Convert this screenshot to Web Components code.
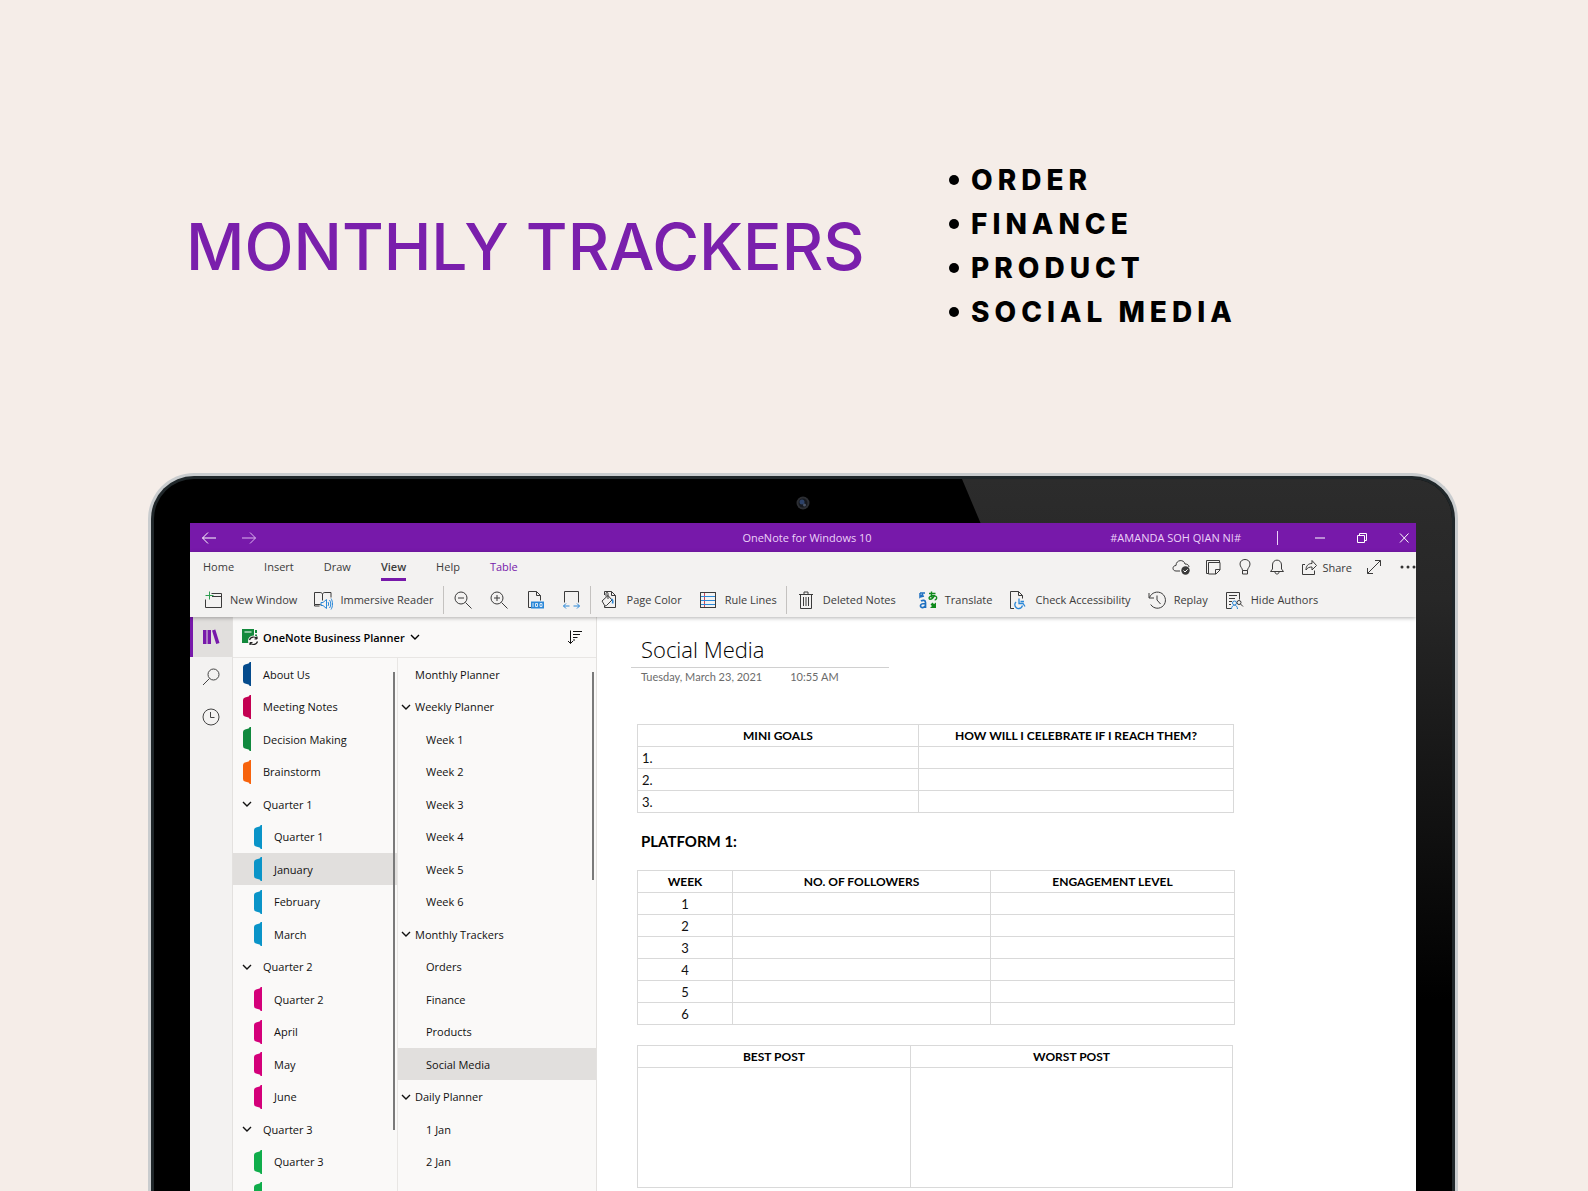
<!DOCTYPE html>
<html lang="en">
<head>
<meta charset="utf-8">
<title>Monthly Trackers</title>
<style>
    body {
        margin: 0;
        height: 100vh;
        overflow: hidden;
        display: flex;
        flex-direction: column;
        background: #f5ede8;
        font-family: "Open Sans", "Noto Sans", sans-serif;
        font-size: 11px;
        color: #111;
    }
</style>
</head>
<body>
<promo-banner heading="MONTHLY TRACKERS">
    <li>ORDER</li>
    <li>FINANCE</li>
    <li>PRODUCT</li>
    <li>SOCIAL MEDIA</li>
</promo-banner>
<laptop-frame>
    <title-bar></title-bar>
    <ribbon-bar></ribbon-bar>
    <notebook-view></notebook-view>
</laptop-frame>

<script>
// every icon is drawn on a 20x20 grid
const icons = {
    back: `<path d="M17 10H3.500M9 4.500 3.500 10 9 15.500"/>`,
    forward: `<path d="M3 10h13.500M11 4.500l5.500 5.500-5.500 5.500"/>`,
    minimize: `<path d="M5 10h10"/>`,
    restore: `<path d="M5.500 7.500h7v7h-7zM7.500 7.500v-2h7v7h-2"/>`,
    close: `<path d="M6 5.500l8.500 9M14.500 5.500l-8.500 9"/>`,
    newWindow: `<path d="M8.500 3.500h10v14h-16v-8M9 6.500h9.500"/><path d="M6.500 1.500v8M2.500 5.500h8" stroke="#2f9e52"/>`,
    reader: `<path d="M9 15.500c-1-.8-2-1-3-1H1.500v-12H7c1.300 0 2 .6 2.500 1.500.5-.9 1.200-1.500 2.500-1.500h6v5M9.500 4v6.500M1.500 14.500v1.500h5"/><path d="M8 12.500h2l3.500-3v9l-3.500-3H8zM15 12c.8 1 .8 3 0 4M16.500 10c1.700 2 1.700 6 0 8M18 8.500c2 3 2 8 0 11" stroke="#2b88d8"/>`,
    zoomOut: `<circle cx="8" cy="8" r="6"/><path d="M5 8h6M12.500 12.500l6 6"/>`,
    zoomIn: `<circle cx="8" cy="8" r="6"/><path d="M5 8h6M8 5v6M12.500 12.500l6 6"/>`,
    page100: `<path d="M7 17.500H3.500v-16h8l4 4v5M11.500 1.500v4h4"/><path d="M6 11.500h13v7H6z" fill="#2b88d8" stroke="none"/><path d="M8 13v4M10.500 13.500h2v3h-2zM15 13.500h2v3h-2z" stroke="#fff" stroke-width=".8"/>`,
    fitWidth: `<path d="M3.500 12.500v-11h14v11"/><path d="M2.500 16h6M12.500 16h6M5 13.500 2.500 16 5 18.500M16 13.500l2.500 2.500-2.500 2.500" stroke="#2b88d8"/>`,
    pageColor: `<path d="M4.500 5V1.500h7l4 4v12h-11V16M11.500 1.500v4h4"/><path d="M2 11l6-5.500 4 4.500-5.500 5.500-1.500.5zM8 9V3.500C8 2 6 2 6 3.500v3"/><path d="M11.500 9c1.500.5 1.500 3 1 4.500" stroke="#2b88d8" stroke-width="1.600"/>`,
    ruleLines: `<path d="M2.500 2.500h15v15h-15z"/><path d="M6.500 3v14" stroke="#c8465b"/><path d="M3 6.500h14M3 10.500h14M3 14.500h14" stroke="#2b88d8"/><path d="M2.500 2.500h15v15h-15z"/>`,
    trash: `<path d="M4.500 4.500h11v14h-11zM3 4.500h14M8 4V2h4v2M7.500 7v9M10 7v9M12.500 7v9"/>`,
    translate: `<path d="M2 3h5M2 3v4l3-3M2 7l4-1" stroke="#1d6fc0" stroke-width="1.500"/><path d="M3 11c2-1.300 4.500-.8 4.500 1.500V18M7.500 13.500c-3 0-5 .5-5 2.300 0 2.500 4 2.300 5-.3" stroke="#1d6fc0" stroke-width="1.700"/><path d="M11 3.500h6.500M13.500 1.500c-.3 3 0 5 .8 7.300M16.500 5c-.8 2.500-2.800 4.300-4.500 4.300-1.800-.6-.7-3.300 2-3.600 3-.4 5 .6 4.700 2.400-.1 1-1 1.700-2 2" stroke="#108a1c" stroke-width="1.400"/><path d="M18 12.500V18h-6l2-2-1.500-1.500 2-2L16 14z" fill="#108a1c" stroke="none"/>`,
    accessibility: `<path d="M6 18.500H2.500v-17h8l4 4v3M10.500 1.500v4h4"/><path d="M8 12c-2.500 2.500-.5 7 3 6.500 2 0 3-1.500 3.500-3M11 8.500v5h4l2 3M12.500 11.500h3.500" stroke="#2b88d8" stroke-width="1.300"/>`,
    replay: `<path d="M2 3v5h5M2.500 7.500c2-5 8-7 12.500-4 4 3 4.500 8.500 1.500 12-3.500 4-10 3.500-12.800-1M10 5.500V10l3.500 4"/>`,
    authors: `<path d="M7 18.500H2.500v-16h13v7M5 5.500h8M5 8.500h6M5 11.500h3M5 14.500h2"/><circle cx="10.500" cy="13" r="2" stroke="#2b88d8"/><path d="M7.500 19c0-5 6-5 6 0" stroke="#2b88d8"/><circle cx="15" cy="12.500" r="2"/><path d="M16.500 14l2.500 2.500"/>`,
    cloud: `<path d="M9 14H5C1 14 1 8.500 5 8.500 5 2.500 13 2 14 7c2.300 0 4 1 4 3"/><circle cx="14.500" cy="13.500" r="4.200" fill="#3b3b3b" stroke="none"/><path d="M12.500 13.500l1.500 1.500 2.700-2.700" stroke="#fff"/>`,
    note: `<path d="M5.500 16.500h-2v-13h13v2"/><path d="M5.500 5.500H17V13l-4 4H5.500zM17 12.500h-4.500V17"/>`,
    bulb: `<path d="M7.500 13.500C7.500 11 5 10 5 7c0-6 10-6 10 0 0 3-2.500 4-2.500 6.500zM7.500 13.500v3.500h5v-3.500"/>`,
    bell: `<path d="M3.500 14.500h13l-2-2.500V8c0-6.500-9-6.500-9 0v4zM8 15c0 2.700 4 2.700 4 0"/>`,
    share: `<path d="M6 7.500H3.500v10h12v-4"/><path d="M7 13c0-4 2-6.500 6-6.500v-3L17.500 8.500 13 13v-3c-2.500 0-4.500.5-6 3z"/>`,
    expand: `<path d="M3.500 16.500l13-13M11 3.500h5.500V9M3.500 11v5.500H9"/>`,
    more: `<g fill="#333" stroke="none"><circle cx="6" cy="10" r="1.500"/><circle cx="12" cy="10" r="1.500"/><circle cx="18" cy="10" r="1.500"/></g>`,
    library: `<path d="M2 3h3.500v14H2zM6.500 3H10v14H6.500zM11 3.500l3.300-.9L18.500 16l-3.300 1z" fill="#7719aa" stroke="none"/>`,
    search: `<circle cx="12.500" cy="7.500" r="5.500"/><path d="M8.500 11.500 2 18"/>`,
    recent: `<circle cx="10" cy="10" r="8"/><path d="M9.500 5v5.500h4"/>`,
    notebook: `<path d="M2 2h12v14H2z" fill="#13893c" stroke="none"/><path d="M4.500 5h7" stroke="#fff"/><path d="M15 3h2v3h-2zM15 7.500h2v2h-2z" fill="#13893c" stroke="none"/><circle cx="13.500" cy="14" r="5.500" fill="#faf9f8" stroke="none"/><path d="M9.500 13c1-3.500 6-4 7.500-1V9.500M17 12h-2.500M17.500 14.500c-1 3.500-6 4-7.500 1V18M10 15.500h2.500" stroke="#222" stroke-width="1.200"/>`,
    sort: `<path d="M5.500 3.500v13M3 14l2.500 2.500L8 14M8 4.500h9M8 7.500h7M8 10.500h4.500M8 13h2"/>`,
    chevron: `<path d="M6 8l4 4 4-4" stroke-width="1.400"/>`
};

class UiIcon extends HTMLElement {
    constructor () {
        super();
        this.attachShadow({mode: "open"});
    }

    connectedCallback () {
        this.shadowRoot.innerHTML = `
        <style>
            :host { display: block; flex: none; width: 20px; height: 20px; }
            svg { display: block; width: 100%; height: 100%; fill: none; stroke: currentColor; stroke-width: 1; }
        </style>
        <svg viewBox="0 0 20 20" aria-hidden="true">${icons[this.getAttribute("name")]}</svg>`;
    }
}
customElements.define("ui-icon", UiIcon);


class PromoBanner extends HTMLElement {
    constructor () {
        super();
        this.attachShadow({mode: "open"});
    }

    connectedCallback () {
        this.shadowRoot.innerHTML = `
        <style>
            :host {
                display: grid;
                grid-template-columns: 760px 1fr;
                align-items: center;
                flex: none;
                box-sizing: border-box;
                height: 473px;
                padding: 20px 0 0 186px;
                font-family: Inter, sans-serif;
            }
            h1 {
                margin: 0;
                font-size: 64px;
                font-weight: 500;
                line-height: 72px;
                color: #7a1fac;
                white-space: nowrap;
            }
            ul {
                margin: 0 0 2px;
                padding: 0;
                list-style: none;
                font-size: 28px;
                font-weight: 800;
                line-height: 44px;
                letter-spacing: 5px;
                color: #000;
            }
            ::slotted(li) {
                display: flex;
                align-items: center;
            }
            ::slotted(li)::before {
                content: "";
                width: 10px;
                height: 10px;
                margin: 0 12px 0 3px;
                border-radius: 50%;
                background: #000;
            }
        </style>
        <h1>${this.getAttribute("heading")}</h1>
        <ul><slot></slot></ul>`;
    }
}
customElements.define("promo-banner", PromoBanner);


class LaptopFrame extends HTMLElement {
    constructor () {
        super();
        this.attachShadow({mode: "open"});
    }

    connectedCallback () {
        this.shadowRoot.innerHTML = `
        <style>
            :host {
                display: flex;
                flex: 1;
                min-height: 0;
                margin: 0 130px 0 148px;
            }
            .shell {
                position: relative;
                flex: 1;
                min-width: 0;
                display: flex;
                border: 3px solid #c9ccce;
                border-bottom: 0;
                border-radius: 46px 46px 0 0;
                background: #20272a;
                overflow: hidden;
            }
            .bezel {
                flex: 1;
                min-width: 0;
                display: flex;
                flex-direction: column;
                margin: 3px 3px 0;
                padding: 0 36px;
                border-radius: 40px 40px 0 0;
                background: #000;
                overflow: hidden;
                position: relative;
            }
            /* reflection falling over the right side of the glass */
            .glare {
                position: absolute;
                inset: 0 0 0 808px;
                background: linear-gradient(#2c2c2c, #272727 120px, #000 520px);
                clip-path: polygon(0 0, 100% 0, 100% 100%, 300px 100%);
            }
            .camera {
                position: relative;
                flex: none;
                box-sizing: border-box;
                height: 44px;
                padding-top: 4px;
                display: flex;
                align-items: center;
                justify-content: center;
            }
            .camera svg { display: block; width: 14px; height: 14px; }
            .screen {
                position: relative;
                flex: 1;
                min-height: 0;
                display: flex;
                flex-direction: column;
                background: #fff;
                overflow: hidden;
            }
        </style>
        <div class="shell">
            <div class="bezel">
                <div class="glare"></div>
                <div class="camera">
                    <svg viewBox="0 0 14 14">
                        <circle cx="7" cy="7" r="6.500" fill="#2c2e33"/>
                        <circle cx="7" cy="7" r="4.500" fill="#16191f"/>
                        <circle cx="6" cy="6" r="2.500" fill="#2c4168"/>
                        <circle cx="8.500" cy="9" r="1.500" fill="#4a5468"/>
                    </svg>
                </div>
                <div class="screen"><slot></slot></div>
            </div>
        </div>`;
    }
}
customElements.define("laptop-frame", LaptopFrame);


class TitleBar extends HTMLElement {
    constructor () {
        super();
        this.attachShadow({mode: "open"});
    }

    connectedCallback () {
        this.shadowRoot.innerHTML = `
        <style>
            :host {
                display: grid;
                grid-template-columns: 1fr auto 1fr;
                align-items: center;
                flex: none;
                height: 29px;
                background: #7719aa;
                color: #ecd2f8;
            }
            div { display: flex; align-items: center; }
            button {
                border: 0;
                padding: 0;
                background: none;
                color: #fff;
            }
            .nav { gap: 20px; padding-left: 9px; }
            .nav button + button { color: #dcb6ee; }
            .title { padding-left: 8px; }
            .window { justify-content: flex-end; gap: 22px; padding-right: 2px; }
            .user { margin-right: 14px; }
            .bar { width: 1px; height: 14px; margin-right: 10px; background: #ecd2f8; }
        </style>
        <div class="nav">
            <button aria-label="Back"><ui-icon name="back"></ui-icon></button>
            <button aria-label="Forward"><ui-icon name="forward"></ui-icon></button>
        </div>
        <span class="title">OneNote for Windows 10</span>
        <div class="window">
            <span class="user">#AMANDA SOH QIAN NI#</span>
            <span class="bar"></span>
            <button aria-label="Minimize"><ui-icon name="minimize"></ui-icon></button>
            <button aria-label="Restore"><ui-icon name="restore"></ui-icon></button>
            <button aria-label="Close"><ui-icon name="close"></ui-icon></button>
        </div>`;
    }
}
customElements.define("title-bar", TitleBar);


class RibbonBar extends HTMLElement {
    constructor () {
        super();
        this.attachShadow({mode: "open"});
    }

    tool (icon, label, hidden) {
        return hidden
            ? `<button aria-label="${label}"><ui-icon name="${icon}"></ui-icon></button>`
            : `<button><ui-icon name="${icon}"></ui-icon>${label}</button>`;
    }

    connectedCallback () {
        this.shadowRoot.innerHTML = `
        <style>
            :host {
                display: block;
                flex: none;
                position: relative;
                z-index: 1;
                background: #f3f2f1;
                color: #3b3b3b;
                box-shadow: 0 1px 4px rgba(0, 0, 0, .3);
            }
            .row { display: flex; align-items: center; }
            button {
                display: flex;
                align-items: center;
                gap: 7px;
                border: 0;
                padding: 0 8px;
                background: none;
                font: inherit;
                color: inherit;
                white-space: nowrap;
            }
            .tabs { height: 30px; }
            .tabs nav { display: flex; flex: 1; padding-left: 13px; gap: 30px; }
            .tabs nav button { height: 28px; padding: 0; border-bottom: 3px solid transparent; border-top: 2px solid transparent; }
            .tabs nav .active { font-weight: 600; border-bottom-color: #7719aa; }
            .tabs nav .context { color: #7719aa; }
            .actions button { padding: 0 6px; gap: 3px; }
            .actions button:last-child { padding-right: 0; }
            .tools { height: 35px; padding-left: 5px; }
            .review { margin-left: 6px; }
            .line { width: 1px; height: 28px; margin: 0 1px; background: #c4c2c0; }
        </style>
        <div class="row tabs">
            <nav>
                <button>Home</button>
                <button>Insert</button>
                <button>Draw</button>
                <button class="active">View</button>
                <button>Help</button>
                <button class="context">Table</button>
            </nav>
            <div class="row actions">
                ${this.tool("cloud", "Sync status", true)}
                ${this.tool("note", "Feed", true)}
                ${this.tool("bulb", "Tell me", true)}
                ${this.tool("bell", "Notifications", true)}
                ${this.tool("share", "Share")}
                ${this.tool("expand", "Full screen", true)}
                ${this.tool("more", "More", true)}
            </div>
        </div>
        <div class="row tools">
            ${this.tool("newWindow", "New Window")}
            ${this.tool("reader", "Immersive Reader")}
            <span class="line"></span>
            ${this.tool("zoomOut", "Zoom out", true)}
            ${this.tool("zoomIn", "Zoom in", true)}
            ${this.tool("page100", "Zoom to 100%", true)}
            ${this.tool("fitWidth", "Page width", true)}
            <span class="line"></span>
            ${this.tool("pageColor", "Page Color")}
            ${this.tool("ruleLines", "Rule Lines")}
            <span class="line"></span>
            ${this.tool("trash", "Deleted Notes")}
            <div class="row review">
                ${this.tool("translate", "Translate")}
                ${this.tool("accessibility", "Check Accessibility")}
                ${this.tool("replay", "Replay")}
                ${this.tool("authors", "Hide Authors")}
            </div>
        </div>`;
    }
}
customElements.define("ribbon-bar", RibbonBar);


class NavList extends HTMLElement {
    constructor () {
        super();
        this.attachShadow({mode: "open"});
    }

    // items: { text, color, group, level, active }
    set items (items) {
        this.shadowRoot.innerHTML = `
        <style>
            :host { display: block; position: relative; overflow: hidden; }
            ul {
                display: grid;
                grid-auto-rows: 32px 33px;
                margin: 0;
                padding: 0;
                list-style: none;
            }
            li { display: grid; }
            a {
                display: flex;
                align-items: center;
                gap: var(--mark-gap);
                padding-left: var(--indent);
                color: inherit;
                text-decoration: none;
            }
            a.child { padding-left: calc(var(--indent) + 11px); }
            a.active { background: #e1dfdd; }
            .mark { flex: none; width: var(--mark-width); display: flex; justify-content: center; }
            .mark svg { display: block; width: 8px; height: 24px; }
            .mark ui-icon { margin: 0 -6px; }
            .scroll {
                position: absolute;
                top: 14px;
                right: 2px;
                width: 2px;
                height: var(--scroll);
                background: #7a7a7a;
            }
        </style>
        <ul>${items.map(item => `
            <li><a href="#" class="${item.level ? "child" : ""} ${item.active ? "active" : ""}">
                <span class="mark">${this.mark(item)}</span>${item.text}
            </a></li>`).join("")}
        </ul>
        <div class="scroll"></div>`;
    }

    mark (item) {
        if (item.group) return `<ui-icon name="chevron"></ui-icon>`;
        if (!item.color) return "";
        return `<svg viewBox="0 0 8 24"><path fill="${item.color}" d="M0 5Q0 3 2 2.500L5.500 1.500Q6.500 1.300 6.500 0H8V24H6.500Q6.500 22.700 5.500 22.500L2 21.500Q0 21 0 19Z"/></svg>`;
    }
}
customElements.define("nav-list", NavList);


class NoteTable extends HTMLElement {
    constructor () {
        super();
        this.attachShadow({mode: "open"});
    }

    connectedCallback () {
        const heads = this.getAttribute("heads").split("|");
        const widths = this.getAttribute("widths").split("|");
        const rows = this.getAttribute("rows").split("|");
        this.shadowRoot.innerHTML = `
        <style>
            :host { display: block; }
            table {
                border-collapse: collapse;
                table-layout: fixed;
                width: var(--table-width, 596px);
            }
            th, td {
                box-sizing: border-box;
                height: 22px;
                border: 1px solid #d9d9d9;
                padding: 0 4px;
                line-height: 20px;
            }
            th { font-size: 12px; font-weight: 700; color: #000; }
            td { height: var(--cell-height, 22px); font-size: 13px; text-align: var(--cell-align, left); }
        </style>
        <table>
            <colgroup>${widths.map(w => `<col style="width: ${w}px">`).join("")}</colgroup>
            <thead><tr>${heads.map(h => `<th scope="col">${h}</th>`).join("")}</tr></thead>
            <tbody>${rows.map(r => `<tr><td>${r}</td>${"<td></td>".repeat(heads.length - 1)}</tr>`).join("")}</tbody>
        </table>`;
    }
}
customElements.define("note-table", NoteTable);


class NotePage extends HTMLElement {
    constructor () {
        super();
        this.attachShadow({mode: "open"});
    }

    connectedCallback () {
        this.shadowRoot.innerHTML = `
        <style>
            :host {
                display: block;
                padding: 14px 0 0 34px;
                background: #fff;
                font-family: Lato, sans-serif;
                overflow: hidden;
            }
            h1 {
                width: 248px;
                margin: 0;
                padding-left: 10px;
                border-bottom: 1px solid #d0d0d0;
                font: 300 22px/36px "Open Sans", sans-serif;
                color: #000;
            }
            p { display: flex; gap: 28px; margin: 0 0 39px 10px; line-height: 17px; color: #6b6b6b; }
            h2 { margin: 18px 0 19px 10px; font-size: 15px; line-height: 20px; color: #000; }
            note-table { margin-left: 6px; }
            .weeks { --table-width: 597px; --cell-align: center; margin-bottom: 20px; }
            .posts { --table-width: 595px; --cell-height: 120px; }
        </style>
        <header>
            <h1>Social Media</h1>
            <p><span>Tuesday, March 23, 2021</span><span>10:55 AM</span></p>
        </header>
        <note-table heads="MINI GOALS|HOW WILL I CELEBRATE IF I REACH THEM?" widths="281|315" rows="1.|2.|3."></note-table>
        <h2>PLATFORM 1:</h2>
        <note-table class="weeks" heads="WEEK|NO. OF FOLLOWERS|ENGAGEMENT LEVEL" widths="95|258|244" rows="1|2|3|4|5|6"></note-table>
        <note-table class="posts" heads="BEST POST|WORST POST" widths="273|322" rows=" "></note-table>`;
    }
}
customElements.define("note-page", NotePage);


class NotebookView extends HTMLElement {
    constructor () {
        super();
        this.attachShadow({mode: "open"});
    }

    connectedCallback () {
        this.shadowRoot.innerHTML = `
        <style>
            :host {
                display: grid;
                grid-template-columns: 43px 364px 1fr;
                flex: 1;
                min-height: 0;
            }
            button { border: 0; padding: 0; background: none; font: inherit; color: inherit; }
            .rail { background: #f3f2f1; border-right: 1px solid #e3e1df; color: #444; }
            .rail button {
                display: flex;
                width: 100%;
                height: 40px;
                align-items: center;
                justify-content: center;
            }
            .rail .active {
                background: #e1dfdd;
                border-left: 3px solid #7719aa;
                padding-right: 3px;
            }
            .side {
                display: grid;
                grid-template: 41px 1fr / 164px 1fr;
                min-height: 0;
                background: #faf9f8;
                border-right: 1px solid #e3e1df;
            }
            .head {
                grid-column: 1 / -1;
                display: flex;
                align-items: center;
                justify-content: space-between;
                padding: 0 11px 0 7px;
                border-bottom: 1px solid #e8e6e4;
            }
            .book { display: flex; align-items: center; font-weight: 600; color: #000; }
            .book ui-icon:first-child { margin-right: 3px; }
            .sections { --indent: 10px; --mark-width: 8px; --mark-gap: 12px; --scroll: 458px; }
            .pages { --indent: 4px; --mark-width: 8px; --mark-gap: 5px; --scroll: 208px; border-left: 1px solid #e8e6e4; }
        </style>
        <div class="rail">
            <button class="active" aria-label="Notebooks"><ui-icon name="library"></ui-icon></button>
            <button aria-label="Search"><ui-icon name="search"></ui-icon></button>
            <button aria-label="Recent notes"><ui-icon name="recent"></ui-icon></button>
        </div>
        <div class="side">
            <div class="head">
                <button class="book"><ui-icon name="notebook"></ui-icon>OneNote Business Planner<ui-icon name="chevron"></ui-icon></button>
                <button aria-label="Sort pages"><ui-icon name="sort"></ui-icon></button>
            </div>
            <nav-list class="sections"></nav-list>
            <nav-list class="pages"></nav-list>
        </div>
        <note-page></note-page>`;

        const child = (color, active) => text => ({ text, color, level: 1, active: text === active });

        this.shadowRoot.querySelector(".sections").items = [
            { text: "About Us", color: "#054b8c" },
            { text: "Meeting Notes", color: "#c30052" },
            { text: "Decision Making", color: "#10893e" },
            { text: "Brainstorm", color: "#f7630c" },
            { text: "Quarter 1", group: true },
            ...["Quarter 1", "January", "February", "March"].map(child("#0a94c8", "January")),
            { text: "Quarter 2", group: true },
            ...["Quarter 2", "April", "May", "June"].map(child("#d4007a")),
            { text: "Quarter 3", group: true },
            ...["Quarter 3", "July"].map(child("#0fad4b"))
        ];

        this.shadowRoot.querySelector(".pages").items = [
            { text: "Monthly Planner" },
            { text: "Weekly Planner", group: true },
            ...["Week 1", "Week 2", "Week 3", "Week 4", "Week 5", "Week 6"].map(child()),
            { text: "Monthly Trackers", group: true },
            ...["Orders", "Finance", "Products", "Social Media"].map(child("", "Social Media")),
            { text: "Daily Planner", group: true },
            ...["1 Jan", "2 Jan", "3 Jan"].map(child())
        ];
    }
}
customElements.define("notebook-view", NotebookView);
</script>
</body>
</html>
